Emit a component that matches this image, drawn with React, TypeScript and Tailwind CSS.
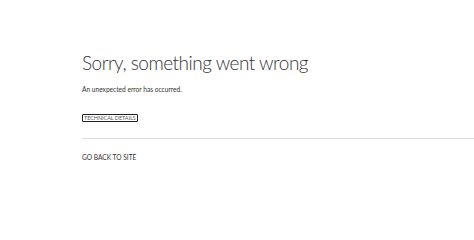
export default function App() {
  return (
    <div className="w-[474px] h-[209px] bg-white overflow-hidden" style={{ fontFamily: 'Lato, "Noto Sans", sans-serif' }}>
      <div className="pl-[82px] pt-[50px]">
        <h1 className="text-[19px] leading-[26px] font-light tracking-[-0.5px] text-[#333]">Sorry, something went wrong</h1>
        <p className="mt-[8px] text-[6.6px] leading-[10px] text-[#333]">An unexpected error has occurred.</p>
        <div className="mt-[12px] leading-none">
          <span className="inline-block border border-[#222] rounded-[1px] px-px text-[5.4px] leading-[6px] text-[#555] uppercase">Technical Details</span>
        </div>
        <div className="mt-[16px] h-px bg-[#ddd]" />
        <p className="mt-[13px] text-[6.6px] leading-[10px] text-[#333] uppercase">Go back to site</p>
      </div>
    </div>
  );
}
